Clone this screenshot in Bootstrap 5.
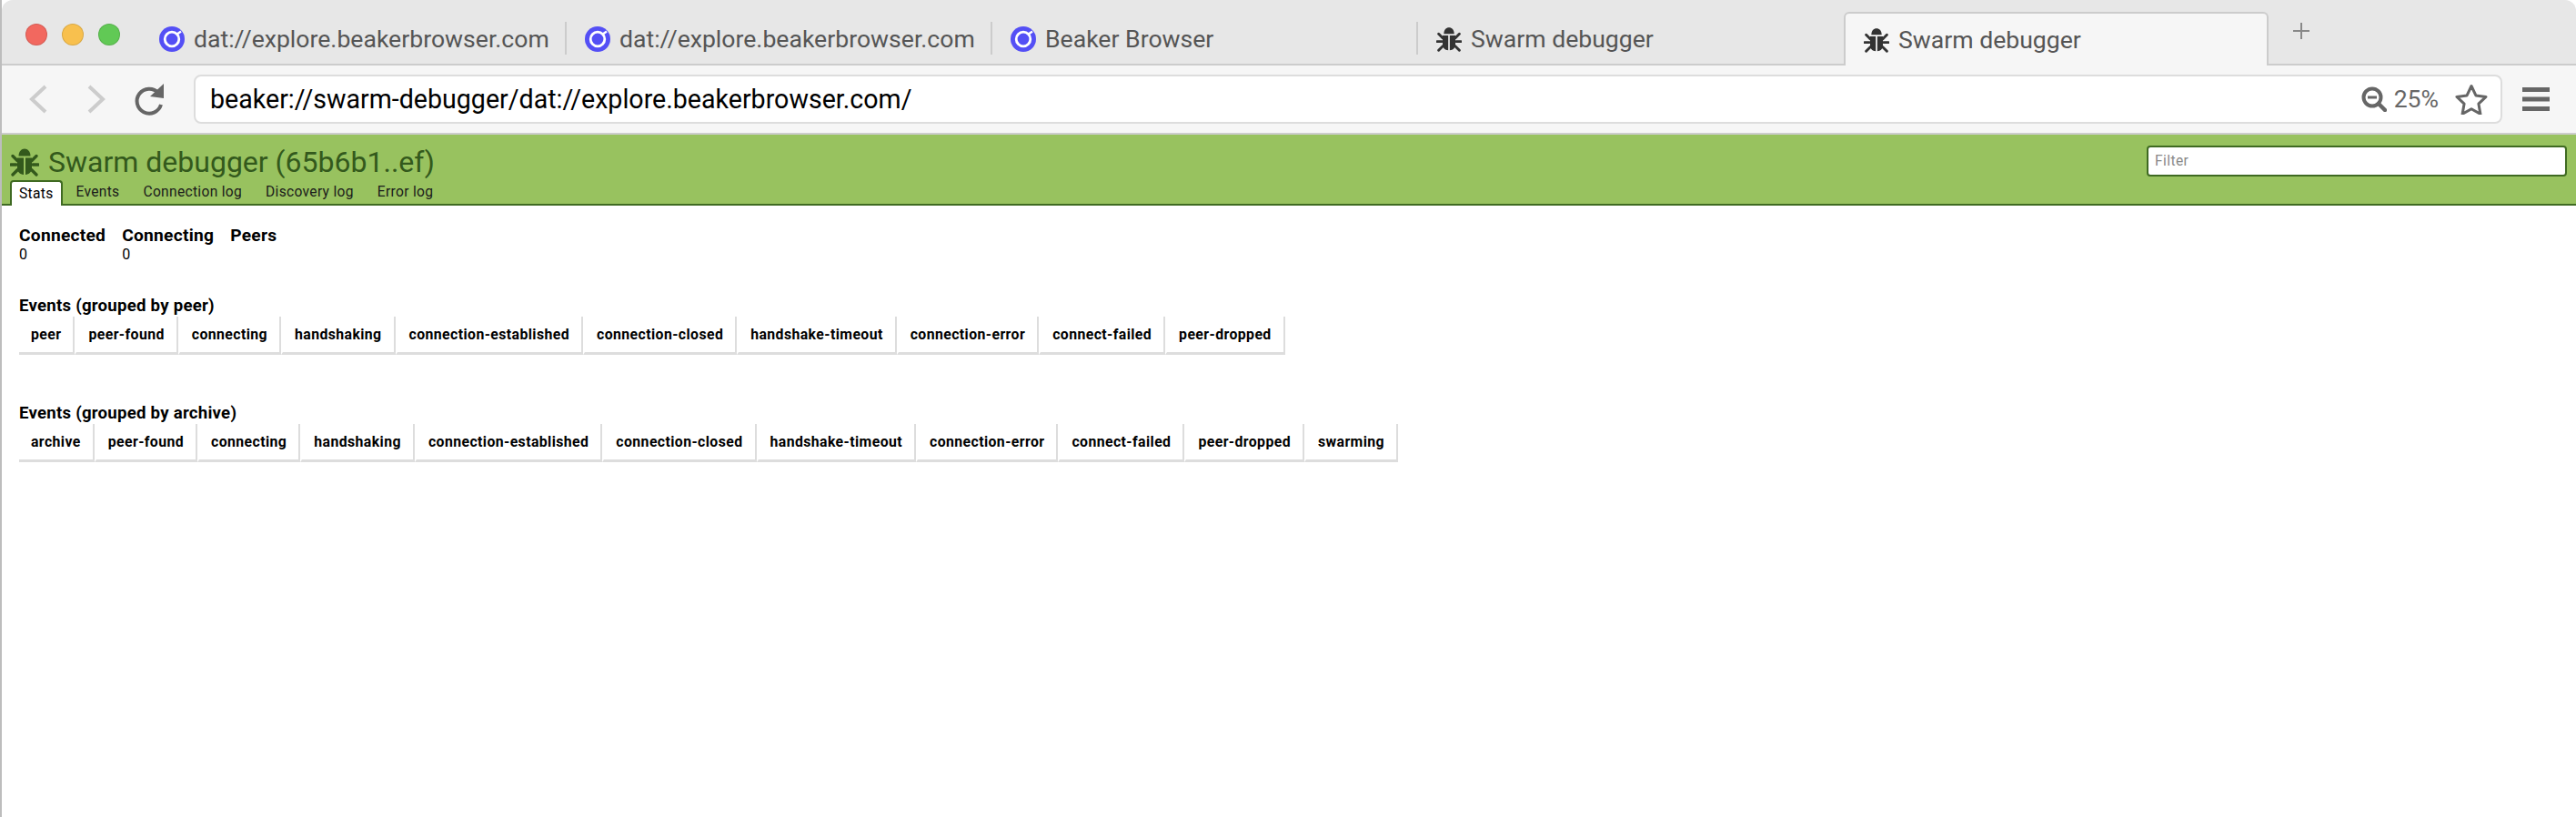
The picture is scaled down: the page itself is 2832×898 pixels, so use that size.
<!DOCTYPE html>
<html lang="en">
<head>
<meta charset="utf-8">
<title>Swarm debugger</title>
<link href="https://cdn.jsdelivr.net/npm/bootstrap@5.3.0/dist/css/bootstrap.min.css" rel="stylesheet">
<style>
html,body{height:100%;background:#fff;}
body{font-family:Roboto,"Liberation Sans",sans-serif;color:#000;overflow:hidden;}
.win{height:898px;border-left:2px solid #bdbdbd;}
.tabbar{height:72px;background:#e7e7e7;border-bottom:2px solid #ccc;padding-left:151px;position:relative;border-top-left-radius:12px;border-top-right-radius:12px;}
.lights{position:absolute;left:26px;top:26px;gap:16px;}
.light{width:24px;height:24px;border-radius:50%;border:1px solid rgba(0,0,0,.12);}
.tabitem{width:468px;height:59px;margin-top:13px;color:#555;font-size:26.6px;position:relative;padding-left:22px;gap:10px;white-space:nowrap;}
.tabitem+.tabitem::before{content:"";position:absolute;left:0;top:11px;height:36px;width:2px;background:#ccc;}
.tabitem.on{background:#f6f6f6;border:2px solid #ccc;border-bottom:0;border-radius:6px 6px 0 0;height:59px;margin-bottom:-2px;padding-top:0;padding-left:20px;margin-left:2px;width:467px;}
.tabitem.on::before{display:none;}
.tabitem.after::before{display:block;}
.plus{margin-left:26px;margin-top:24px;}
.toolbar{height:76px;background:#f6f6f6;border-bottom:2px solid #ccc;}
.navzone{width:211px;}
.addr{width:2538px;height:54px;background:#fff;border:2px solid #ddd;border-radius:8px;font-size:28.6px;padding:0 14px 0 16px;}
.zoomtxt{font-size:26.6px;color:#666;margin:0 18px 0 8px;}
.burger{margin-left:22px;}
.dbg{height:78px;background:#98c25f;border-bottom:2px solid #3f6a22;padding:0 10px 0 9px;}
.dbgtitle{font-size:32px;line-height:38px;color:#33591c;font-weight:400;margin:0;gap:10px;padding-top:10px;height:50px;}
.dbgtabs{margin:0;padding:0;list-style:none;gap:0;}
.dbgtab{font-size:15.6px;letter-spacing:.3px;line-height:26px;height:26px;padding:0 13px;color:#1b1b1b;}
.dbgtab.on{background:#fff;color:#000;border:2px solid #3f6a22;border-bottom:0;border-radius:4px 4px 0 0;height:28px;margin-left:0;padding:0 8px;margin-right:2px;position:relative;top:0;margin-bottom:-2px;}
.filterbox{width:462px;height:34px;border:2px solid #3f6a22;border-radius:4px;background:#fff;font-size:15.6px;letter-spacing:.4px;padding:0 7px;margin-top:12px;outline:none;}
.filterbox::placeholder{color:#8a8a8a;opacity:1;}
.pane{padding:21px 0 0 19px;}
.statgrid{gap:18px;}
.stathead{font-size:19.2px;font-weight:700;line-height:24px;letter-spacing:.25px;}
.statval{font-size:16px;line-height:18px;}
.sect{font-size:18.6px;font-weight:700;line-height:22px;letter-spacing:.25px;}
.sect1{margin-top:36px;}
.sect2{margin-top:53px;}
.evt{border-collapse:separate;border-spacing:0;margin:1px 0 0 0;}
.evt th{font-size:15.8px;font-weight:700;letter-spacing:.42px;height:42px;padding:0 13px;border-right:2px solid #ddd;border-bottom:3px solid #ddd;box-shadow:none;white-space:nowrap;}
.evt th+th{border-left:2px solid #fff;}
svg{display:block;flex:none;}
</style>
</head>
<body>
<svg width="0" height="0" style="position:absolute">
<defs>
<symbol id="bug" viewBox="0 0 32 32">
<path d="M9.5 9.5C9.5 4.5 12.5 1.5 16 1.5s6.500 3 6.500 8z" fill="currentColor"/>
<path d="M8 11.500h7V30c-4-.3-7-3-7-7.500zM17 11.500h7v11c0 4.500-3 7.200-7 7.500z" fill="currentColor"/>
<path d="M8 14.500 3 9.500M24 14.500l5-5M7 19H1M25 19h6M8.500 24.500 3 30M23.500 24.500 29 30" stroke="currentColor" stroke-width="3.300" stroke-linecap="round" fill="none"/>
</symbol>
<symbol id="dot" viewBox="0 0 28 28">
<circle cx="14" cy="14" r="14" fill="#544ff5"/>
<circle cx="14" cy="14" r="7.800" fill="none" stroke="#fff" stroke-width="2.800"/>
<path d="M19 9l5-3.500" stroke="#fff" stroke-width="2.400"/>
</symbol>
</defs>
</svg>
<div class="win d-flex flex-column">
  <div class="tabbar d-flex">
    <div class="lights d-flex">
      <span class="light" style="background:#f2685f"></span>
      <span class="light" style="background:#f8c04e"></span>
      <span class="light" style="background:#61c955"></span>
    </div>
    <div class="tabitem d-flex align-items-center"><svg width="28" height="28"><use href="#dot"/></svg><span>dat://explore.beakerbrowser.com</span></div>
    <div class="tabitem d-flex align-items-center"><svg width="28" height="28"><use href="#dot"/></svg><span>dat://explore.beakerbrowser.com</span></div>
    <div class="tabitem d-flex align-items-center"><svg width="28" height="28"><use href="#dot"/></svg><span>Beaker Browser</span></div>
    <div class="tabitem d-flex align-items-center"><svg width="28" height="28" style="color:#333"><use href="#bug"/></svg><span>Swarm debugger</span></div>
    <div class="tabitem on d-flex align-items-center"><svg width="28" height="28" style="color:#333"><use href="#bug"/></svg><span>Swarm debugger</span></div>
    <svg class="plus" width="20" height="20" viewBox="0 0 20 20"><path d="M10 1v18M1 10h18" stroke="#888" stroke-width="2"/></svg>
  </div>
  <div class="toolbar d-flex align-items-center">
    <div class="navzone flex-shrink-0">
      <svg width="190" height="40" viewBox="0 0 190 40">
        <path d="M48 6 33 20l15 14" fill="none" stroke="#ccc" stroke-width="4"/>
        <path d="M96 6l15 14-15 14" fill="none" stroke="#ccc" stroke-width="4"/>
        <path d="M172 13a13.500 13.500 0 1 0 3 13" fill="none" stroke="#666" stroke-width="4"/>
        <path d="M178 3v16l-15-2z" fill="#666"/>
      </svg>
    </div>
    <div class="addr d-flex align-items-center flex-shrink-0">
      <span class="flex-grow-1">beaker://swarm-debugger/dat://explore.beakerbrowser.com/</span>
      <svg width="28" height="28" viewBox="0 0 28 28"><circle cx="12" cy="12" r="9.500" fill="none" stroke="#666" stroke-width="4"/><path d="M7 12h10" stroke="#666" stroke-width="3"/><path d="M19 19l7 7" stroke="#666" stroke-width="4.500" stroke-linecap="round"/></svg>
      <span class="zoomtxt">25%</span>
      <svg width="36" height="34" viewBox="0 0 36 34"><path d="M18 2.500l4.900 10.400 11.100 1.500-8.100 7.700 2 11.200L18 27.800 8.100 33.300l2-11.200L2 14.400l11.100-1.500z" fill="none" stroke="#666" stroke-width="3" stroke-linejoin="round"/></svg>
    </div>
    <svg class="burger" width="30" height="26" viewBox="0 0 30 26"><path d="M0 0h30v5H0zM0 10.500h30v5H0zM0 21h30v5H0z" fill="#666"/></svg>
  </div>
  <div class="dbg d-flex justify-content-between">
    <div>
      <h1 class="dbgtitle d-flex align-items-center"><svg width="32" height="32" style="color:#33591c"><use href="#bug"/></svg><span>Swarm debugger (65b6b1..ef)</span></h1>
      <ul class="dbgtabs d-flex">
        <li class="dbgtab on">Stats</li>
        <li class="dbgtab">Events</li>
        <li class="dbgtab">Connection log</li>
        <li class="dbgtab">Discovery log</li>
        <li class="dbgtab">Error log</li>
      </ul>
    </div>
    <input class="filterbox" type="text" placeholder="Filter">
  </div>
  <div class="pane">
    <div class="statgrid d-flex">
      <div><div class="stathead">Connected</div><div class="statval">0</div></div>
      <div><div class="stathead">Connecting</div><div class="statval">0</div></div>
      <div><div class="stathead">Peers</div></div>
    </div>
    <div class="sect sect1">Events (grouped by peer)</div>
    <table class="evt"><thead><tr><th>peer</th><th>peer-found</th><th>connecting</th><th>handshaking</th><th>connection-established</th><th>connection-closed</th><th>handshake-timeout</th><th>connection-error</th><th>connect-failed</th><th>peer-dropped</th></tr></thead></table>
    <div class="sect sect2">Events (grouped by archive)</div>
    <table class="evt"><thead><tr><th>archive</th><th>peer-found</th><th>connecting</th><th>handshaking</th><th>connection-established</th><th>connection-closed</th><th>handshake-timeout</th><th>connection-error</th><th>connect-failed</th><th>peer-dropped</th><th>swarming</th></tr></thead></table>
  </div>
</div>
</body>
</html>
